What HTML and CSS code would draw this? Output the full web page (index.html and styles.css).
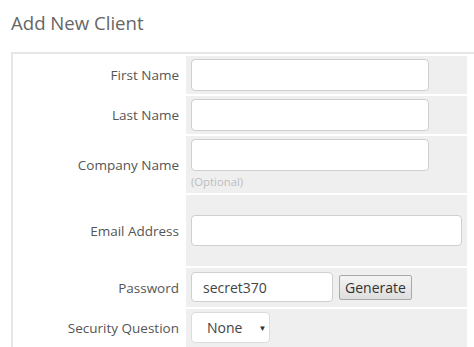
FILE: index.html
```html
<!DOCTYPE html>
<html>
<head>
<meta charset="utf-8">
<link rel="stylesheet" href="styles.css">
</head>
<body>
<div class="page">
  <h1 class="title">Add New Client</h1>
  <div class="box">
    <div class="form">
      <div class="label">First Name</div>
      <div class="field"><input class="input w-std" type="text"></div>

      <div class="label">Last Name</div>
      <div class="field"><input class="input w-std" type="text"></div>

      <div class="label">Company Name</div>
      <div class="field field-stack"><input class="input w-std" type="text"><span class="hint">(Optional)</span></div>

      <div class="label">Email Address</div>
      <div class="field field-email"><input class="input w-wide" type="text"></div>

      <div class="label">Password</div>
      <div class="field field-pass"><input class="input w-pass" type="text" value="secret370"><button class="btn" type="button">Generate</button></div>

      <div class="label">Security Question</div>
      <div class="field field-select"><div class="select"><span>None</span><span class="caret">&#9660;</span></div></div>
    </div>
  </div>
</div>
</body>
</html>
```
FILE: styles.css
```css
html, body {
  margin: 0;
  padding: 0;
  background: #fff;
  overflow: hidden;
}
body {
  font-family: "Open Sans", "Liberation Sans", sans-serif;
  color: #555;
}
.page {
  padding: 0 0 0 11px;
}
.title {
  margin: 10px 0 16px 0;
  font-size: 18.6px;
  font-weight: 400;
  line-height: 26px;
  color: #666;
}
.box {
  border: 2px solid #e6e6e6;
  width: 480px;
  box-sizing: border-box;
}
.form {
  display: grid;
  grid-template-columns: 169px 281px;
  gap: 2px;
  padding: 2px;
}
.label {
  display: flex;
  align-items: center;
  justify-content: flex-end;
  padding-right: 5px;
  font-size: 13.5px;
  color: #555;
  background: #fff;
}
.field {
  background: #efefef;
  padding: 3px 5px;
  display: flex;
  align-items: center;
}
.field-stack {
  flex-direction: column;
  align-items: flex-start;
  padding-bottom: 4px;
}
.field-email {
  padding: 20px 5px;
}
.field-pass {
  padding: 4px 5px 5px 5px;
}
.field-select {
  padding: 3px 5px 4px 5px;
}
.input {
  box-sizing: border-box;
  height: 32px;
  border: 1px solid #cfcfcf;
  border-radius: 4px;
  background: #fff;
  font-family: "Open Sans", "Liberation Sans", sans-serif;
  font-size: 14px;
  color: #444;
  padding: 0 11px;
  margin: 0;
  outline: none;
}
.w-std { width: 238px; }
.w-wide { width: 272px; height: 31px; }
.w-pass { width: 142px; height: 30px; }
.hint {
  margin-top: 3px;
  font-size: 11.3px;
  line-height: 15px;
  color: #bdbdbd;
}
.btn {
  margin-left: 6px;
  box-sizing: border-box;
  width: 73px;
  height: 25px;
  padding: 0;
  border: 1px solid #a9a9a9;
  border-radius: 2px;
  background: linear-gradient(#f4f4f4, #dedede);
  font-family: "Open Sans", "Liberation Sans", sans-serif;
  font-size: 14px;
  color: #333;
}
.select {
  box-sizing: border-box;
  width: 79px;
  height: 31px;
  border: 1px solid #dcdcdc;
  border-radius: 4px;
  background: #fff;
  display: flex;
  align-items: center;
  padding-left: 15px;
  font-size: 14px;
  color: #444;
}
.caret {
  margin-left: 16px;
  font-size: 8px;
  color: #333;
}
```
